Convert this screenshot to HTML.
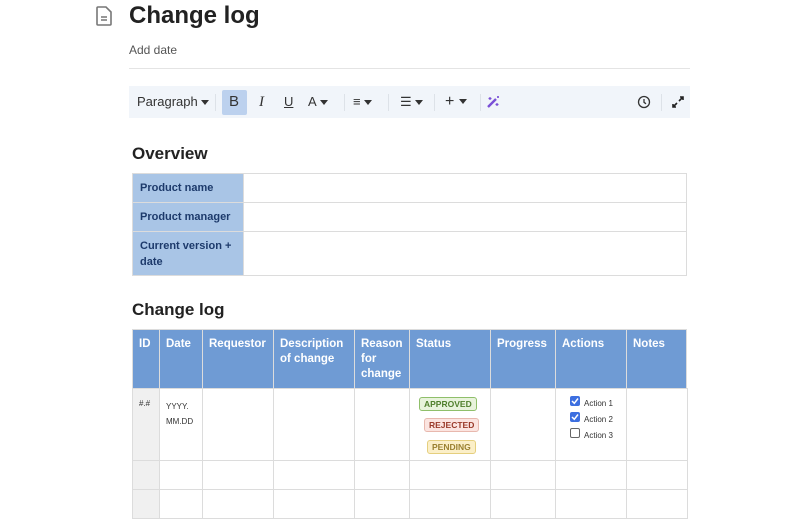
<!DOCTYPE html>
<html><head><meta charset="utf-8"><style>
*{box-sizing:border-box;margin:0;padding:0}
body{width:800px;height:524px;overflow:hidden;background:#fff;font-family:"Liberation Sans",sans-serif;color:#172b4d;position:relative}
.a{position:absolute}
.tb{left:129px;top:86px;width:561px;height:32px;background:#f1f5fa}
.sep{position:absolute;top:8px;width:1px;height:17px;background:#dde2e8}
.caret{display:inline-block;width:0;height:0;border-left:4px solid transparent;border-right:4px solid transparent;border-top:5px solid #333;vertical-align:middle}
.ic{position:absolute;top:0;height:32px;line-height:32px;font-size:14px;color:#333}
.cell{position:absolute;border:1px solid #dcdcdc}
.h{background:#6f9bd4;color:#fff;font-weight:bold;font-size:11.5px;line-height:15px;padding:7px 6px;border-color:#dcdcdc}
.ov{background:#a9c5e6;color:#1d3a6b;font-weight:bold;font-size:11px;line-height:16px;padding:6px 7px}
.lz{font-size:8px;color:#333}
.tag{position:absolute;font-size:8.5px;font-weight:bold;border-radius:3px;padding:1px 4px;line-height:10px}
.cb{position:absolute;width:10px;height:10px;border-radius:2px}
</style></head><body>
<svg class="a" style="left:96px;top:6px" width="16" height="20" viewBox="0 0 16 20"><path d="M2 1h8l5 5v12a1 1 0 0 1-1 1H2a1 1 0 0 1-1-1V2a1 1 0 0 1 1-1z" fill="none" stroke="#777" stroke-width="1.6"/><path d="M5 11h6M5 14h6" stroke="#777" stroke-width="1.5"/></svg>
<div class="a" style="left:129px;top:2px;font-size:24px;font-weight:bold;color:#222">Change log</div>
<div class="a" style="left:129px;top:43px;font-size:12px;color:#555">Add date</div>
<div class="a" style="left:129px;top:68px;width:561px;height:1px;background:#e4e4e4"></div>
<div class="a tb">
<div class="ic" style="left:8px;font-size:13px">Paragraph <span class="caret"></span></div>
<div class="sep" style="left:86px"></div>
<div class="a" style="left:93px;top:4px;width:25px;height:25px;background:#bcd1ee;border-radius:2px"></div>
<div class="ic" style="left:100px;font-size:15px">B</div>
<div class="ic" style="left:130px;font-style:italic;font-family:'Liberation Serif',serif;font-size:15px">I</div>
<div class="ic" style="left:155px;text-decoration:underline;font-size:13px">U</div>
<div class="ic" style="left:179px;font-size:13px">A <span class="caret"></span></div>
<div class="sep" style="left:215px"></div>
<div class="ic" style="left:224px;font-size:13px">≡ <span class="caret"></span></div>
<div class="sep" style="left:259px"></div>
<div class="ic" style="left:271px;font-size:13px">☰ <span class="caret"></span></div>
<div class="sep" style="left:305px"></div>
<div class="ic" style="left:316px;font-size:16px">+ <span class="caret"></span></div>
<div class="sep" style="left:351px"></div>
<svg class="a" style="left:357px;top:9px" width="14" height="14" viewBox="0 0 14 14"><path d="M2 12L10 4" stroke="#7a4fd6" stroke-width="2.4"/><path d="M4 2v3M2.5 3.5h3M11 8v3M9.5 9.5h3M12 1v2M11 2h2" stroke="#7a4fd6" stroke-width="1.2"/></svg>
<svg class="a" style="left:508px;top:9px" width="14" height="14" viewBox="0 0 14 14"><circle cx="7" cy="7" r="5.5" fill="none" stroke="#333" stroke-width="1.3"/><path d="M7 4v3.3l2 1.5" fill="none" stroke="#333" stroke-width="1.3"/></svg>
<div class="sep" style="left:532px"></div>
<svg class="a" style="left:542px;top:9px" width="14" height="14" viewBox="0 0 14 14"><path d="M8 6l4-4M9 2h3v3M6 8l-4 4M2 9v3h3" fill="none" stroke="#222" stroke-width="1.6"/></svg>
</div>
<div class="a" style="left:132px;top:144px;font-size:17px;font-weight:bold;color:#222">Overview</div>
<div class="cell ov" style="left:132px;top:173px;width:112px;height:30px">Product name</div>
<div class="cell" style="left:243px;top:173px;width:444px;height:30px"></div>
<div class="cell ov" style="left:132px;top:202px;width:112px;height:30px">Product manager</div>
<div class="cell" style="left:243px;top:202px;width:444px;height:30px"></div>
<div class="cell ov" style="left:132px;top:231px;width:112px;height:45px">Current version + date</div>
<div class="cell" style="left:243px;top:231px;width:444px;height:45px"></div>
<div class="a" style="left:132px;top:300px;font-size:17px;font-weight:bold;color:#222">Change log</div>
<div class="cell h" style="left:132px;top:329px;width:28px;height:60px">ID</div>
<div class="cell h" style="left:159px;top:329px;width:44px;height:60px">Date</div>
<div class="cell h" style="left:202px;top:329px;width:72px;height:60px">Requestor</div>
<div class="cell h" style="left:273px;top:329px;width:82px;height:60px">Description of change</div>
<div class="cell h" style="left:354px;top:329px;width:56px;height:60px">Reason for change</div>
<div class="cell h" style="left:409px;top:329px;width:82px;height:60px">Status</div>
<div class="cell h" style="left:490px;top:329px;width:66px;height:60px">Progress</div>
<div class="cell h" style="left:555px;top:329px;width:72px;height:60px">Actions</div>
<div class="cell h" style="left:626px;top:329px;width:61px;height:60px">Notes</div>
<div class="cell" style="left:132px;top:388px;width:28px;height:73px;background:#f0f0f0"></div>
<div class="cell" style="left:132px;top:460px;width:28px;height:30px;background:#f0f0f0"></div>
<div class="cell" style="left:132px;top:489px;width:28px;height:30px;background:#f0f0f0"></div>
<div class="a lz" style="left:139px;top:399px">#.#</div>
<div class="a lz" style="left:166px;top:399px;line-height:15px">YYYY.<br>MM.DD</div>
<div id="grid"></div>
<div class="tag" style="left:419px;top:397px;background:#e8f3dc;border:1px solid #8fbf6a;color:#4f7f2c">APPROVED</div>
<div class="tag" style="left:424px;top:418px;background:#fbe4e0;border:1px solid #e8b8ae;color:#9a3a2a">REJECTED</div>
<div class="tag" style="left:427px;top:440px;background:#fbefc8;border:1px solid #e5cf7e;color:#9a8030">PENDING</div>
<div class="cb" style="left:570px;top:396px;background:#3d6fe0"></div>
<div class="cb" style="left:570px;top:412px;background:#3d6fe0"></div>
<div class="cb" style="left:570px;top:428px;border:1px solid #666"></div>
<svg class="a" style="left:570px;top:396px" width="10" height="26" viewBox="0 0 10 26"><path d="M2 5l2.3 2.3L8 2.5M2 21l2.3 2.3L8 18.5" fill="none" stroke="#fff" stroke-width="1.5"/></svg>
<div class="a lz" style="left:584px;top:399px">Action 1</div>
<div class="a lz" style="left:584px;top:415px">Action 2</div>
<div class="a lz" style="left:584px;top:431px">Action 3</div>
<script>
var xs=[159,202,273,354,409,490,555,626,687],rows=[[388,73],[460,30],[489,30]],g='';
rows.forEach(function(r){for(var i=0;i<8;i++)g+='<div class="cell" style="left:'+xs[i]+'px;top:'+r[0]+'px;width:'+(xs[i+1]-xs[i]+1)+'px;height:'+r[1]+'px"></div>';});
document.getElementById('grid').innerHTML=g;
</script>
</body></html>
